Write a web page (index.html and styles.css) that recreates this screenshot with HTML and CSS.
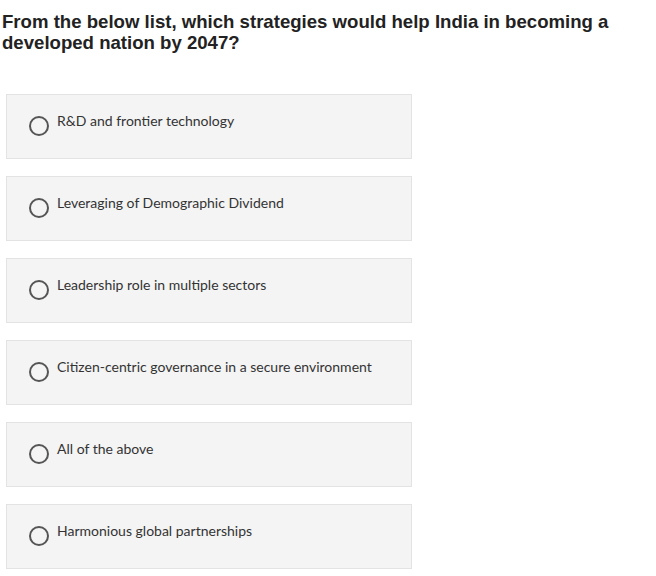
FILE: index.html
```html
<!DOCTYPE html>
<html lang="en">
<head>
    <meta charset="UTF-8">
    <title>Question</title>
    <link rel="stylesheet" href="styles.css">
</head>
<body>
    <div class="question">
        <h2 class="question-title">From the below list, which strategies would help India in becoming a developed nation by 2047?</h2>

        <div class="options">
            <label class="option">
                <input type="radio" name="answer" class="radio">
                <span class="option-text">R&amp;D and frontier technology</span>
            </label>
            <label class="option">
                <input type="radio" name="answer" class="radio">
                <span class="option-text">Leveraging of Demographic Dividend</span>
            </label>
            <label class="option">
                <input type="radio" name="answer" class="radio">
                <span class="option-text">Leadership role in multiple sectors</span>
            </label>
            <label class="option">
                <input type="radio" name="answer" class="radio">
                <span class="option-text">Citizen-centric governance in a secure environment</span>
            </label>
            <label class="option">
                <input type="radio" name="answer" class="radio">
                <span class="option-text">All of the above</span>
            </label>
            <label class="option">
                <input type="radio" name="answer" class="radio">
                <span class="option-text">Harmonious global partnerships</span>
            </label>
        </div>
    </div>
</body>
</html>
```

FILE: styles.css
```css
* {
    margin: 0;
    padding: 0;
    box-sizing: border-box;
}

body {
    background: #ffffff;
    color: #333333;
    font-family: 'Liberation Sans', Arial, sans-serif;
}

.question {
    padding: 11px 0 0 2px;
}

.question-title {
    font-size: 18.6px;
    line-height: 21px;
    font-weight: 700;
    color: #222222;
    max-width: 640px;
}

.options {
    display: flex;
    flex-direction: column;
    gap: 17px;
    margin: 41px 0 0 4px;
    width: 406px;
}

.option {
    display: flex;
    align-items: flex-start;
    gap: 8px;
    height: 65px;
    padding: 17px 20px 0 22px;
    background: #f4f4f4;
    border: 1px solid #e3e3e3;
    cursor: pointer;
}

.radio {
    appearance: none;
    -webkit-appearance: none;
    flex: none;
    width: 20px;
    height: 20px;
    margin-top: 4px;
    border: 2px solid #555555;
    border-radius: 50%;
    background: transparent;
    cursor: pointer;
}

.radio:checked {
    background: radial-gradient(circle, #555555 0 4px, transparent 5px);
}

.option-text {
    font-family: Lato, 'Open Sans', sans-serif;
    font-size: 14px;
    line-height: 17px;
    color: #333333;
}
```
